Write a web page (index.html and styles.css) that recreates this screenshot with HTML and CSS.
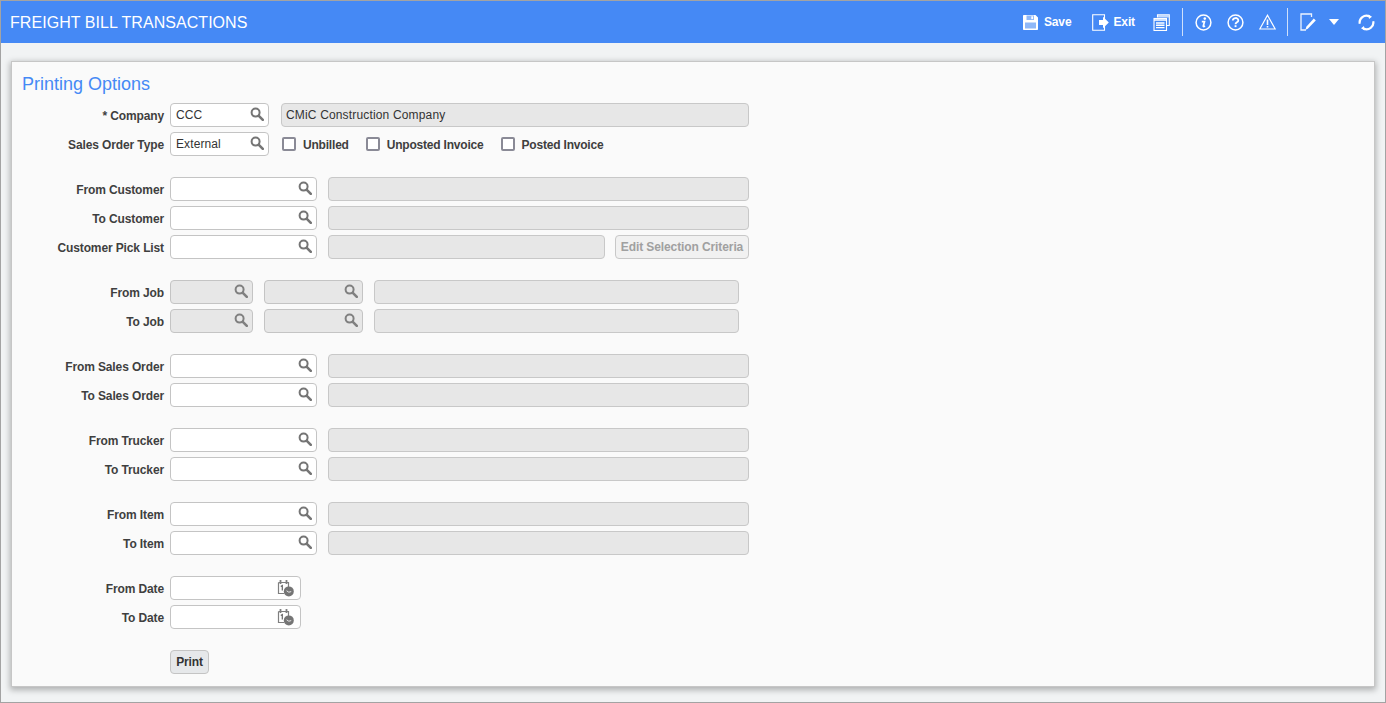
FILE: index.html
```html
<!DOCTYPE html>
<html lang="en">
<head>
<meta charset="utf-8">
<title>Freight Bill Transactions</title>
<link rel="stylesheet" href="styles.css">
</head>
<body>
<svg class="defs" width="0" height="0" aria-hidden="true">
  <symbol id="search" viewBox="0 0 14 14">
    <circle cx="5.6" cy="5.600" r="4" fill="none" stroke="currentColor" stroke-width="2"/>
    <path d="M8.800 8.800l4 4" fill="none" stroke="currentColor" stroke-width="2.600" stroke-linecap="round"/>
  </symbol>
  <symbol id="cal" viewBox="0 0 17 18">
    <path d="M1.500 3.500h10v5M7 14.500H1.500v-11" fill="none" stroke="#7f7f7f" stroke-width="1.200"/>
    <path d="M3.500 1v4M9.500 1v4" stroke="#7f7f7f" stroke-width="1.800"/>
    <path d="M3.800 7.500l1.500-1v5" fill="none" stroke="#666" stroke-width="1.200"/>
    <circle cx="11.800" cy="12.400" r="5" fill="#757575"/>
    <path d="M9.600 11.800l2.200 1.400 2.400-.6" fill="none" stroke="#e8e8e8" stroke-width="1"/>
  </symbol>
</svg>
<header class="topbar">
  <h1 class="app-title">FREIGHT BILL TRANSACTIONS</h1>
  <nav class="tools">
    <span class="tool tool-save">
      <svg width="17" height="17" viewBox="0 0 17 17"><path d="M1 1.800a.8.8 0 0 1 .8-.8h11.700L16 3.500v11.700a.8.800 0 0 1-.8.8H1.800a.8.800 0 0 1-.8-.8z" fill="#fff"/><path d="M4.500 1.500h7.500v4.500H4.500z" fill="#8fb8f8"/><rect x="9.300" y="2.300" width="1.800" height="2.800" fill="#fff"/><rect x="3" y="8.500" width="11" height="6" fill="#8fb8f8"/></svg>
      <span>Save</span>
    </span>
    <span class="tool tool-exit">
      <svg width="17" height="17" viewBox="0 0 17 17"><path d="M12.500 5V.7H.7v15.600h11.800V12" fill="none" stroke="#fff" stroke-width="1.100"/><path d="M7 6h4V2.800L16.800 8.500 11 14.200V11H7z" fill="#fff"/></svg>
      <span>Exit</span>
    </span>
    <span class="tool tool-report">
      <svg width="17" height="17" viewBox="0 0 17 17"><path d="M4.500 3.500V.7h11.800v10.800h-2.500" fill="none" stroke="#fff" stroke-width="1.100"/><rect x="5" y="1" width="11" height="2.500" fill="#c6dbfc"/><rect x="1" y="4.500" width="12.500" height="12" fill="#4589f5" stroke="#fff" stroke-width="1.100"/><path d="M1 6h12.500M3 9h8.500M3 11.300h8.500M3 13.600h8.500" stroke="#fff" stroke-width="1.400"/></svg>
    </span>
    <span class="sep"></span>
    <span class="tool tool-info">
      <svg width="17" height="17" viewBox="0 0 17 17"><circle cx="8.500" cy="8.500" r="7.400" fill="none" stroke="#fff" stroke-width="1.500"/><circle cx="9.800" cy="4.600" r="1.300" fill="#fff"/><path d="M6.800 7.600h2.700l-1.200 4.400c-.1.700.6.700 1.700 0" fill="none" stroke="#fff" stroke-width="1.700"/></svg>
    </span>
    <span class="tool tool-help">
      <svg width="17" height="17" viewBox="0 0 17 17"><circle cx="8.500" cy="8.500" r="7.400" fill="none" stroke="#fff" stroke-width="1.500"/><path d="M5.800 6.600c0-3.400 5.500-3.400 5.500-.2 0 2-2.800 1.900-2.800 3.900" fill="none" stroke="#fff" stroke-width="1.800"/><rect x="7.600" y="11.200" width="1.900" height="1.900" fill="#fff"/></svg>
    </span>
    <span class="tool tool-warn">
      <svg width="17" height="16" viewBox="0 0 17 16"><path d="M8.500 1.200L16.200 15H.8z" fill="none" stroke="#fff" stroke-width="1.200"/><path d="M8.500 5.500v5.500" stroke="#fff" stroke-width="1.600"/><rect x="7.700" y="12" width="1.600" height="1.500" fill="#fff"/></svg>
    </span>
    <span class="sep"></span>
    <span class="tool tool-note">
      <svg width="16" height="18" viewBox="0 0 16 18"><path d="M11.500 4V1H1v16h5" fill="none" stroke="#fff" stroke-width="1.300" opacity=".9"/><path d="M5.500 16.800l.8-3L13.800 5.500l2 2-8 8.300z" fill="#fff"/></svg>
    </span>
    <span class="caret"></span>
    <span class="tool">
      <svg width="17" height="17" viewBox="0 0 17 17"><path d="M1.800 9.800A6.700 6.700 0 0 1 11.500 2.500M15.200 7.200A6.700 6.700 0 0 1 5.500 14.500" fill="none" stroke="#fff" stroke-width="2.200"/><path d="M10.500 .5l3.500 2.200-3 2.300zM6.500 16.500L3 14.300l3-2.300z" fill="#fff"/></svg>
    </span>
  </nav>
</header>
<main class="content">
  <section class="panel">
    <h2 class="panel-title">Printing Options</h2>
    <form class="form">
      <div class="group">
        <div class="row">
          <label class="lbl">* Company</label>
          <div class="fld w99"><span class="val">CCC</span><svg class="s"><use href="#search"/></svg></div>
          <div class="desc desc-company">CMiC Construction Company</div>
        </div>
        <div class="row">
          <label class="lbl">Sales Order Type</label>
          <div class="fld w99"><span class="val">External</span><svg class="s"><use href="#search"/></svg></div>
          <div class="checks">
            <span class="chk"><i class="box"></i>Unbilled</span>
            <span class="chk"><i class="box"></i>Unposted Invoice</span>
            <span class="chk"><i class="box"></i>Posted Invoice</span>
          </div>
        </div>
      </div>
      <div class="group">
        <div class="row"><label class="lbl">From Customer</label><div class="fld w147"><svg class="s"><use href="#search"/></svg></div><div class="desc d421"></div></div>
        <div class="row"><label class="lbl">To Customer</label><div class="fld w147"><svg class="s"><use href="#search"/></svg></div><div class="desc d421"></div></div>
        <div class="row"><label class="lbl">Customer Pick List</label><div class="fld w147"><svg class="s"><use href="#search"/></svg></div><div class="desc d277"></div><span class="btn-off">Edit Selection Criteria</span></div>
      </div>
      <div class="group">
        <div class="row"><label class="lbl">From Job</label><div class="fld off w83"><svg class="s"><use href="#search"/></svg></div><div class="fld off w99"><svg class="s"><use href="#search"/></svg></div><div class="desc d365"></div></div>
        <div class="row"><label class="lbl">To Job</label><div class="fld off w83"><svg class="s"><use href="#search"/></svg></div><div class="fld off w99"><svg class="s"><use href="#search"/></svg></div><div class="desc d365"></div></div>
      </div>
      <div class="group">
        <div class="row"><label class="lbl">From Sales Order</label><div class="fld w147"><svg class="s"><use href="#search"/></svg></div><div class="desc d421"></div></div>
        <div class="row"><label class="lbl">To Sales Order</label><div class="fld w147"><svg class="s"><use href="#search"/></svg></div><div class="desc d421"></div></div>
      </div>
      <div class="group">
        <div class="row"><label class="lbl">From Trucker</label><div class="fld w147"><svg class="s"><use href="#search"/></svg></div><div class="desc d421"></div></div>
        <div class="row"><label class="lbl">To Trucker</label><div class="fld w147"><svg class="s"><use href="#search"/></svg></div><div class="desc d421"></div></div>
      </div>
      <div class="group">
        <div class="row"><label class="lbl">From Item</label><div class="fld w147"><svg class="s"><use href="#search"/></svg></div><div class="desc d421"></div></div>
        <div class="row"><label class="lbl">To Item</label><div class="fld w147"><svg class="s"><use href="#search"/></svg></div><div class="desc d421"></div></div>
      </div>
      <div class="group">
        <div class="row"><label class="lbl">From Date</label><div class="fld w131"><svg class="c"><use href="#cal"/></svg></div></div>
        <div class="row"><label class="lbl">To Date</label><div class="fld w131"><svg class="c"><use href="#cal"/></svg></div></div>
      </div>
      <div class="group">
        <div class="row"><span class="lbl"></span><button type="button" class="btn">Print</button></div>
      </div>
    </form>
  </section>
</main>
</body>
</html>
```
FILE: styles.css
```css
* { box-sizing: border-box; }
html, body { height: 100%; }
body {
  margin: 0;
  height: 703px;
  overflow: hidden;
  background: #f1f3f4;
  border: 1px solid #a3a3a3;
  font-family: "Liberation Sans", Arial, sans-serif;
  display: flex;
  flex-direction: column;
}
.defs { position: absolute; }
.topbar {
  height: 42px;
  flex: none;
  background: #4589f5;
  color: #fff;
  display: flex;
  align-items: center;
  justify-content: space-between;
  padding-left: 9px;
}
.app-title { margin: 0; padding-top: 1px; font-size: 16px; font-weight: 400; letter-spacing: 0.05px; }
.tools { display: flex; align-items: center; height: 100%; font-size: 12px; font-weight: 700; letter-spacing: -0.12px; padding-right: 10px; }
.tool { display: flex; align-items: center; }
.tool svg { display: block; }
.tool-save { gap: 5px; margin-right: 21px; }
.tool-exit { gap: 4px; margin-right: 18px; }
.tool-report { margin-right: 12px; }
.sep { width: 1px; height: 28px; background: #cfe0fb; }
.tool-info { margin-left: 12px; margin-right: 15px; }
.tool-help { margin-right: 15px; }
.tool-warn { margin-right: 11px; }
.tool-note { margin-left: 12px; margin-right: 13px; }
.caret { width: 0; height: 0; border-left: 5px solid transparent; border-right: 5px solid transparent; border-top: 6px solid #fff; margin-right: 19px; }
.content { flex: 1; padding: 18px 10px 14px 10px; min-height: 0; }
.panel {
  height: 626px;
  background: #fafafa;
  border: 1px solid #c6c6c6;
  box-shadow: 0 2px 6px 1px rgba(0, 0, 0, 0.28);
  padding: 12px 10px 0 10px;
}
.panel-title { margin: 0 0 8px; font-size: 18px; line-height: 21px; font-weight: 400; color: #4589f5; }
.form { display: flex; flex-direction: column; gap: 21px; }
.group { display: flex; flex-direction: column; gap: 5px; }
.row { display: flex; align-items: center; height: 24px; }
.lbl { width: 142px; flex: none; margin-right: 6px; text-align: right; font-size: 12px; font-weight: 700; letter-spacing: -0.12px; color: #3f3f3f; padding-top: 1px; }
.fld {
  height: 24px;
  flex: none;
  background: #fff;
  border: 1px solid #c4c4c4;
  border-radius: 4px;
  display: flex;
  align-items: center;
  justify-content: space-between;
  padding: 0 4px 0 5px;
  margin-right: 11px;
  font-size: 12px;
  letter-spacing: 0.1px;
  color: #333;
}
.fld .s { width: 14px; height: 14px; color: #757575; margin-left: auto; margin-bottom: 2px; }
.fld .c { width: 17px; height: 18px; margin-left: auto; margin-right: 2px; }
.fld.off { background: #e7e7e7; }
.fld.off .s { color: #808080; }
.val { line-height: 14px; }
.w83 { width: 83px; }
.w99 { width: 99px; }
.w131 { width: 131px; }
.w147 { width: 147px; }
.desc {
  height: 24px;
  flex: none;
  background: #e7e7e7;
  border: 1px solid #c8c8c8;
  border-radius: 4px;
  font-size: 12px;
  letter-spacing: 0.16px;
  color: #333;
  line-height: 22px;
  padding-left: 4px;
}
.desc-company { width: 468px; margin-left: 1px; }
.d421 { width: 421px; }
.d277 { width: 277px; margin-right: 10px; }
.d365 { width: 365px; }
.checks { display: flex; align-items: center; gap: 17px; font-size: 12px; font-weight: 700; letter-spacing: -0.2px; color: #3f3f3f; margin-left: 2px; padding-top: 2px; }
.chk { display: flex; align-items: center; }
.box { width: 14px; height: 14px; border: 2px solid #8a8a96; border-radius: 2px; background: #fff; margin-right: 7px; position: relative; top: -1px; }
.btn-off {
  width: 134px;
  height: 24px;
  flex: none;
  border: 1px solid #c8c8c8;
  border-radius: 4px;
  background: #f1f1f1;
  color: #a0a0a0;
  font-size: 12px;
  font-weight: 700;
  letter-spacing: -0.1px;
  text-align: center;
  line-height: 22px;
}
.btn {
  width: 39px;
  height: 24px;
  padding: 0;
  border: 1px solid #c4c4c4;
  border-radius: 4px;
  background: #e6e8ea;
  color: #333;
  font: 700 12px "Liberation Sans", Arial, sans-serif;
  letter-spacing: -0.12px;
}
```
